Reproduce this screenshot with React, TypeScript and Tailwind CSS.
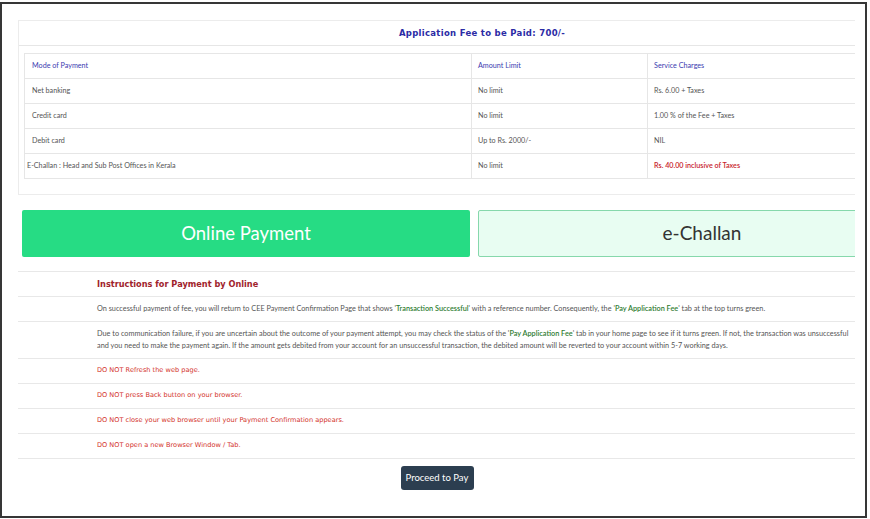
export default function App() {
  const modes = [
    { mode: 'Net banking', limit: 'No limit', charge: 'Rs. 6.00 + Taxes', red: false },
    { mode: 'Credit card', limit: 'No limit', charge: '1.00 % of the Fee + Taxes', red: false },
    { mode: 'Debit card', limit: 'Up to Rs. 2000/-', charge: 'NIL', red: false },
    { mode: 'E-Challan : Head and Sub Post Offices in Kerala', limit: 'No limit', charge: 'Rs. 40.00 inclusive of Taxes', red: true },
  ];
  const warnings = [
    'DO NOT Refresh the web page.',
    'DO NOT press Back button on your browser.',
    'DO NOT close your web browser until your Payment Confirmation appears.',
    'DO NOT open a new Browser Window / Tab.',
  ];
  const lato = { fontFamily: 'Lato, "Open Sans", sans-serif' };
  const verdana = { fontFamily: '"DejaVu Sans", Verdana, sans-serif' };

  return (
    <div className="w-[870px] h-[519px] bg-white pt-[2px]" style={lato}>
      <div className="w-[867px] h-[516px] border-2 border-[#363636] pl-4 pt-[16px] pr-[10px] overflow-hidden">
        <div className="w-[837px] overflow-hidden">
          <div className="w-[928px]">
            {/* Fee table */}
            <div className="border border-[#ececec] pb-[15px]">
              <div className="h-[25px] border-b border-[#e6e6e6] flex items-center justify-center">
                <span className="text-[8.5px] font-bold text-[#2b2ba5] tracking-[0.3px]" style={verdana}>Application Fee to be Paid: 700/-</span>
              </div>
              <div className="mt-[7px] mx-[5px]">
                <table className="w-full border-collapse text-[7.2px]">
                  <thead>
                    <tr className="h-[25px]">
                      <th className="w-[447px] border border-[#e6e6e6] px-[7px] text-left font-normal text-[#3b3bb0]">Mode of Payment</th>
                      <th className="w-[176px] border border-[#e6e6e6] px-[6px] text-left font-normal text-[#3b3bb0]">Amount Limit</th>
                      <th className="border border-[#e6e6e6] px-[6px] text-left font-normal text-[#3b3bb0]">Service Charges</th>
                    </tr>
                  </thead>
                  <tbody>
                    {modes.map((m) => (
                      <tr key={m.mode} className="h-[25px] text-[#555]">
                        <td className={m.red ? 'border border-[#e6e6e6] pl-[2px]' : 'border border-[#e6e6e6] px-[7px]'}>{m.mode}</td>
                        <td className="border border-[#e6e6e6] px-[6px]">{m.limit}</td>
                        <td className={m.red ? 'border border-[#e6e6e6] px-[6px] text-[#c8232c] font-semibold' : 'border border-[#e6e6e6] px-[6px]'}>{m.charge}</td>
                      </tr>
                    ))}
                  </tbody>
                </table>
              </div>
            </div>

            {/* Payment options */}
            <div className="mt-[15px] flex gap-2 px-1">
              <button className="w-[448px] h-[47px] rounded-[2px] bg-[#26dc84] text-white text-[18.5px] flex items-center justify-center">Online Payment</button>
              <button className="w-[448px] h-[47px] rounded-[2px] bg-[#e8fdf2] border border-[#86d8ac] text-[#333] text-[19px] flex items-center justify-center">e-Challan</button>
            </div>
          </div>

          {/* Instructions */}
          <div className="mt-[14px] text-[7.3px] text-[#555]">
            <div className="h-[25px] border-t border-[#e8e8e8] flex items-center pl-[79px]">
              <span className="text-[8.2px] font-bold text-[#a0232b]" style={verdana}>Instructions for Payment by Online</span>
            </div>
            <div className="h-[25px] border-t border-[#e8e8e8] flex items-center pl-[79px]">
              <p>
                On successful payment of fee, you will return to CEE Payment Confirmation Page that shows '<b className="font-semibold text-[#2f7d32]">Transaction Successful</b>' with a reference number. Consequently, the '<b className="font-semibold text-[#2f7d32]">Pay Application Fee</b>' tab at the top turns green.
              </p>
            </div>
            <div className="h-[37px] border-t border-[#e8e8e8] flex items-center pl-[79px]">
              <p className="leading-[12px]">
                Due to communication failure, if you are uncertain about the outcome of your payment attempt, you may check the status of the '<b className="font-semibold text-[#2f7d32]">Pay Application Fee</b>' tab in your home page to see if it turns green. If not, the transaction was unsuccessful and you need to make the payment again. If the amount gets debited from your account for an unsuccessful transaction, the debited amount will be reverted to your account within 5-7 working days.
              </p>
            </div>
            {warnings.map((w) => (
              <div key={w} className="h-[25px] border-t border-[#e8e8e8] flex items-center pl-[79px]">
                <span className="text-[6.6px] text-[#d3322b]" style={verdana}>{w}</span>
              </div>
            ))}
            <div className="border-t border-[#e8e8e8] pt-[7px] flex justify-center">
              <button className="ml-[1px] w-[73px] h-[24px] rounded-[3px] bg-[#2c3e50] text-white text-[9.5px]">Proceed to Pay</button>
            </div>
          </div>
        </div>
      </div>
    </div>
  );
}
